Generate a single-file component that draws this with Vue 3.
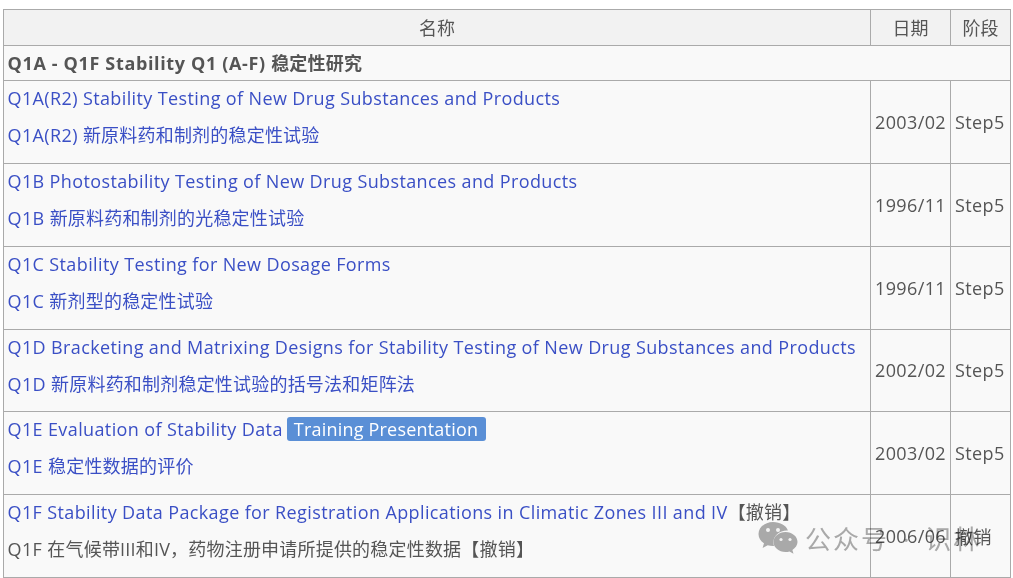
<template>
  <div class="page">
    <table class="grid">
      <colgroup>
        <col class="col-name" />
        <col class="col-date" />
        <col class="col-step" />
      </colgroup>
      <thead>
        <tr class="head-row">
          <th>名称</th>
          <th>日期</th>
          <th>阶段</th>
        </tr>
      </thead>
      <tbody>
        <tr class="group-row">
          <td colspan="3">Q1A - Q1F Stability Q1 (A-F) <span class="cjk">稳定性研究</span></td>
        </tr>
        <tr v-for="row in rows" :key="row.en" class="doc-row">
          <td class="name-cell">
            <p class="line">
              <a class="doc-link">{{ row.en }}</a>
              <a v-if="row.badge" class="badge">{{ row.badge }}</a>
              <span v-if="row.withdrawn" class="cjk">【撤销】</span>
            </p>
            <p class="line" :class="{ 'doc-link': !row.withdrawn }">
              {{ row.code }} <span class="cjk">{{ row.zh }}</span>
            </p>
          </td>
          <td class="date-cell">{{ row.date }}</td>
          <td class="step-cell">{{ row.step }}</td>
        </tr>
      </tbody>
    </table>

    <div class="watermark" aria-hidden="true">
      <svg class="wechat" viewBox="0 0 40 34" width="40" height="34">
        <path d="M15 1C7 1 0.500 6.400 0.500 13c0 3.800 2.100 7 5.500 9.300L4.600 27l5.100-2.800c1.700.5 3.400.8 5.300.8h1c-.4-1.200-.6-2.500-.6-3.800 0-6.600 6-11.800 13.500-11.800h1C28.400 4.600 22.300 1 15 1z" fill="#adadad" />
        <path d="M39.500 21c0-5.600-5.500-10-12-10s-12 4.400-12 10 5.500 10 12 10c1.400 0 2.700-.2 4-.6l4 2.400-1.100-3.800c3-2 5.100-4.800 5.100-8z" fill="#adadad" />
        <circle cx="10" cy="9" r="2" fill="#f9f9f9" />
        <circle cx="20" cy="9" r="2" fill="#f9f9f9" />
        <circle cx="23" cy="18.500" r="1.600" fill="#f9f9f9" />
        <circle cx="32" cy="18.500" r="1.600" fill="#f9f9f9" />
      </svg>
      <span class="wm-text">公众号 · 识林</span>
    </div>
  </div>
</template>

<script setup>
const rows = [
  {
    en: 'Q1A(R2) Stability Testing of New Drug Substances and Products',
    code: 'Q1A(R2)',
    zh: '新原料药和制剂的稳定性试验',
    date: '2003/02',
    step: 'Step5',
  },
  {
    en: 'Q1B Photostability Testing of New Drug Substances and Products',
    code: 'Q1B',
    zh: '新原料药和制剂的光稳定性试验',
    date: '1996/11',
    step: 'Step5',
  },
  {
    en: 'Q1C Stability Testing for New Dosage Forms',
    code: 'Q1C',
    zh: '新剂型的稳定性试验',
    date: '1996/11',
    step: 'Step5',
  },
  {
    en: 'Q1D Bracketing and Matrixing Designs for Stability Testing of New Drug Substances and Products',
    code: 'Q1D',
    zh: '新原料药和制剂稳定性试验的括号法和矩阵法',
    date: '2002/02',
    step: 'Step5',
  },
  {
    en: 'Q1E Evaluation of Stability Data',
    code: 'Q1E',
    zh: '稳定性数据的评价',
    date: '2003/02',
    step: 'Step5',
    badge: 'Training Presentation',
  },
  {
    en: 'Q1F Stability Data Package for Registration Applications in Climatic Zones III and IV',
    code: 'Q1F',
    zh: '在气候带III和IV，药物注册申请所提供的稳定性数据【撤销】',
    date: '2006/06',
    step: '撤销',
    withdrawn: true,
  },
]
</script>

<style>
html,
body {
  margin: 0;
  background: #fff;
}
</style>

<style scoped>
.page {
  position: relative;
  width: 1013px;
  height: 578px;
  padding: 9px 2px 0 3px;
  box-sizing: border-box;
  overflow: hidden;
  font-family: "Open Sans", "Noto Sans CJK SC", sans-serif;
  font-size: 18px;
  letter-spacing: 0.38px;
  color: #555;
}

.cjk {
  letter-spacing: 0.2px;
}

.grid {
  width: 1008px;
  table-layout: fixed;
  border-collapse: collapse;
  background: #f9f9f9;
}

.col-date {
  width: 80px;
}

.col-step {
  width: 60px;
}

th,
td {
  border: 1px solid #aaa;
  padding: 0 3.500px;
  font-weight: 400;
}

.head-row th {
  height: 33px;
  padding-bottom: 2px;
  background: #f2f2f2;
  text-align: center;
  letter-spacing: 0;
}

.group-row td {
  height: 32px;
  padding-bottom: 2px;
  font-weight: 700;
  letter-spacing: 0.65px;
}

.name-cell {
  height: 82px;
  vertical-align: top;
  white-space: nowrap;
}

.doc-row:nth-child(5) .name-cell {
  height: 81px;
}

.line {
  margin: 0;
  height: 36.600px;
  line-height: 35px;
}

.doc-link {
  color: #3a4fc5;
}

.badge {
  display: inline-block;
  margin-left: 4px;
  padding: 0 8px 0 7px;
  height: 24px;
  line-height: 24px;
  border-radius: 3px;
  background: #5a8fd6;
  color: #fff;
  letter-spacing: 0.2px;
}

.date-cell,
.step-cell {
  vertical-align: middle;
  padding-left: 4px;
  padding-right: 0;
  padding-bottom: 1px;
  white-space: nowrap;
}

.watermark {
  position: absolute;
  left: 758px;
  top: 519px;
  display: flex;
  align-items: center;
  gap: 7px;
  color: #adadad;
  font-size: 26px;
  white-space: nowrap;
  mix-blend-mode: multiply;
  pointer-events: none;
}

.wm-text {
  letter-spacing: 2px;
  word-spacing: 5px;
}
</style>
